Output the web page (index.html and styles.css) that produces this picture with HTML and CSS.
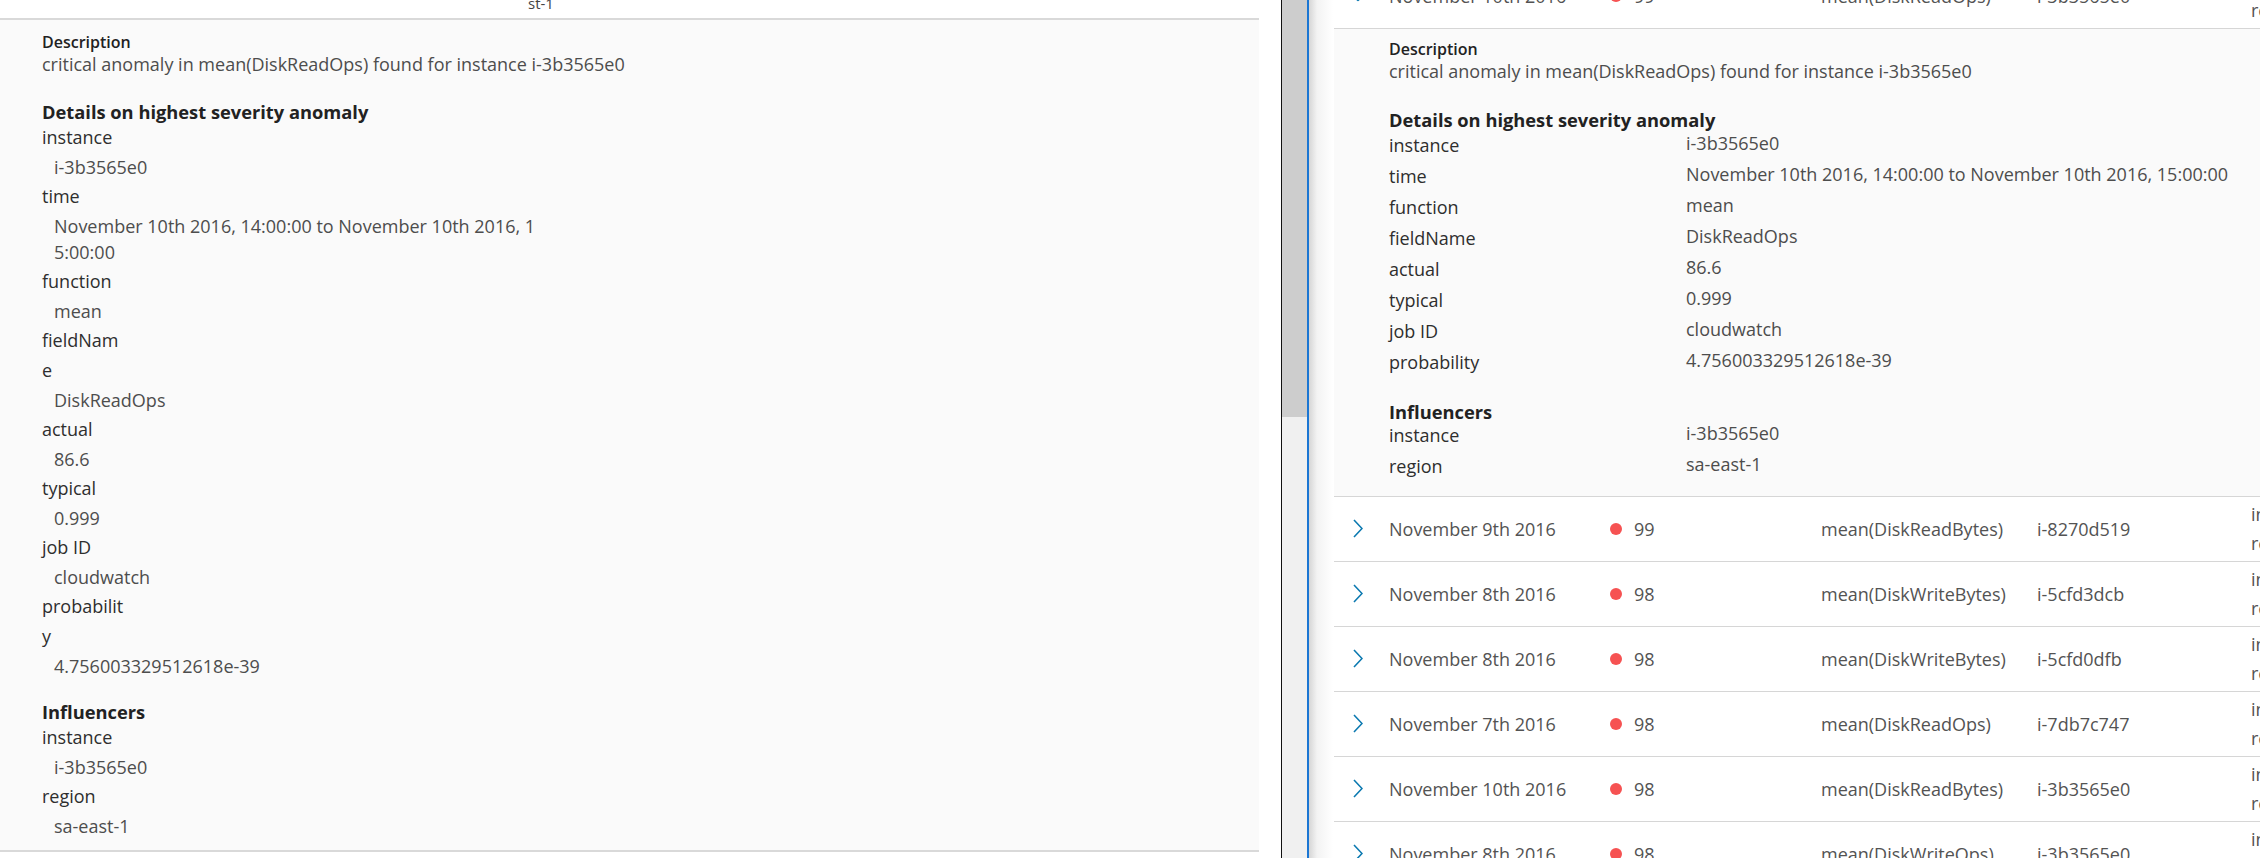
FILE: index.html
```html
<!DOCTYPE html>
<html lang="en">
<head>
<meta charset="utf-8">
<title>Anomalies</title>
<link rel="stylesheet" href="styles.css">
</head>
<body>
<div class="app">
  <section class="left">
    <div class="left-top"><span class="cut">st-1</span></div>
    <div class="left-details">
      <div class="desc-title">Description</div>
      <div class="desc-text">critical anomaly in mean(DiskReadOps) found for instance i-3b3565e0</div>
      <h3 class="sec-title">Details on highest severity anomaly</h3>
      <dl class="stack">
        <dt>instance</dt><dd>i-3b3565e0</dd>
        <dt>time</dt><dd>November 10th 2016, 14:00:00 to November 10th 2016, 15:00:00</dd>
        <dt>function</dt><dd>mean</dd>
        <dt>fieldName</dt><dd>DiskReadOps</dd>
        <dt>actual</dt><dd>86.6</dd>
        <dt>typical</dt><dd>0.999</dd>
        <dt>job ID</dt><dd>cloudwatch</dd>
        <dt>probability</dt><dd>4.756003329512618e-39</dd>
      </dl>
      <h3 class="sec-title sec-gap">Influencers</h3>
      <dl class="stack">
        <dt>instance</dt><dd>i-3b3565e0</dd>
        <dt>region</dt><dd>sa-east-1</dd>
      </dl>
    </div>
  </section>
  <div class="gutter"></div>
  <div class="scrollbar"><div class="thumb"></div></div>
  <section class="right">
    <div class="list">
      <div class="row">
        <span class="cell chev-cell"><svg class="chev open" viewBox="0 0 10 19" width="10" height="19"><polyline points="1,1 9,9.5 1,18"/></svg></span>
        <span class="cell date">November 10th 2016</span>
        <span class="cell score"><i class="dot"></i>99</span>
        <span class="cell fn">mean(DiskReadOps)</span>
        <span class="cell entity">i-3b3565e0</span>
        <span class="cell infl"><span>instance: i-3b3565e0</span><span>region: sa-east-1</span></span>
      </div>
      <div class="details">
        <div class="desc-title">Description</div>
        <div class="desc-text">critical anomaly in mean(DiskReadOps) found for instance i-3b3565e0</div>
        <h3 class="sec-title">Details on highest severity anomaly</h3>
        <dl class="pairs">
          <div class="pair"><dt>instance</dt><dd>i-3b3565e0</dd></div>
          <div class="pair"><dt>time</dt><dd>November 10th 2016, 14:00:00 to November 10th 2016, 15:00:00</dd></div>
          <div class="pair"><dt>function</dt><dd>mean</dd></div>
          <div class="pair"><dt>fieldName</dt><dd>DiskReadOps</dd></div>
          <div class="pair"><dt>actual</dt><dd>86.6</dd></div>
          <div class="pair"><dt>typical</dt><dd>0.999</dd></div>
          <div class="pair"><dt>job ID</dt><dd>cloudwatch</dd></div>
          <div class="pair"><dt>probability</dt><dd>4.756003329512618e-39</dd></div>
        </dl>
        <h3 class="sec-title sec-gap-r">Influencers</h3>
        <dl class="pairs">
          <div class="pair"><dt>instance</dt><dd>i-3b3565e0</dd></div>
          <div class="pair"><dt>region</dt><dd>sa-east-1</dd></div>
        </dl>
      </div>
      <div class="row">
        <span class="cell chev-cell"><svg class="chev" viewBox="0 0 10 19" width="10" height="19"><polyline points="1,1 9,9.5 1,18"/></svg></span>
        <span class="cell date">November 9th 2016</span>
        <span class="cell score"><i class="dot"></i>99</span>
        <span class="cell fn">mean(DiskReadBytes)</span>
        <span class="cell entity">i-8270d519</span>
        <span class="cell infl"><span>instance: i-8270d519</span><span>region: sa-east-1</span></span>
      </div>
      <div class="row">
        <span class="cell chev-cell"><svg class="chev" viewBox="0 0 10 19" width="10" height="19"><polyline points="1,1 9,9.5 1,18"/></svg></span>
        <span class="cell date">November 8th 2016</span>
        <span class="cell score"><i class="dot"></i>98</span>
        <span class="cell fn">mean(DiskWriteBytes)</span>
        <span class="cell entity">i-5cfd3dcb</span>
        <span class="cell infl"><span>instance: i-5cfd3dcb</span><span>region: sa-east-1</span></span>
      </div>
      <div class="row">
        <span class="cell chev-cell"><svg class="chev" viewBox="0 0 10 19" width="10" height="19"><polyline points="1,1 9,9.5 1,18"/></svg></span>
        <span class="cell date">November 8th 2016</span>
        <span class="cell score"><i class="dot"></i>98</span>
        <span class="cell fn">mean(DiskWriteBytes)</span>
        <span class="cell entity">i-5cfd0dfb</span>
        <span class="cell infl"><span>instance: i-5cfd0dfb</span><span>region: sa-east-1</span></span>
      </div>
      <div class="row">
        <span class="cell chev-cell"><svg class="chev" viewBox="0 0 10 19" width="10" height="19"><polyline points="1,1 9,9.5 1,18"/></svg></span>
        <span class="cell date">November 7th 2016</span>
        <span class="cell score"><i class="dot"></i>98</span>
        <span class="cell fn">mean(DiskReadOps)</span>
        <span class="cell entity">i-7db7c747</span>
        <span class="cell infl"><span>instance: i-7db7c747</span><span>region: sa-east-1</span></span>
      </div>
      <div class="row">
        <span class="cell chev-cell"><svg class="chev" viewBox="0 0 10 19" width="10" height="19"><polyline points="1,1 9,9.5 1,18"/></svg></span>
        <span class="cell date">November 10th 2016</span>
        <span class="cell score"><i class="dot"></i>98</span>
        <span class="cell fn">mean(DiskReadBytes)</span>
        <span class="cell entity">i-3b3565e0</span>
        <span class="cell infl"><span>instance: i-3b3565e0</span><span>region: sa-east-1</span></span>
      </div>
      <div class="row">
        <span class="cell chev-cell"><svg class="chev" viewBox="0 0 10 19" width="10" height="19"><polyline points="1,1 9,9.5 1,18"/></svg></span>
        <span class="cell date">November 8th 2016</span>
        <span class="cell score"><i class="dot"></i>98</span>
        <span class="cell fn">mean(DiskWriteOps)</span>
        <span class="cell entity">i-3b3565e0</span>
        <span class="cell infl"><span>instance: i-3b3565e0</span><span>region: sa-east-1</span></span>
      </div>
    </div>
  </section>
</div>
</body>
</html>
```
FILE: styles.css
```css
* { box-sizing: border-box; }
html, body {
  margin: 0;
  padding: 0;
  width: 2260px;
  height: 858px;
  overflow: hidden;
  background: #ffffff;
  font-family: "Open Sans", "Noto Sans", sans-serif;
  color: #333333;
}
.app {
  display: flex;
  width: 2260px;
  height: 858px;
}

/* ---------- left pane ---------- */
.left {
  width: 1259px;
  flex: none;
  display: flex;
  flex-direction: column;
}
.left-top {
  height: 18px;
  overflow: hidden;
  padding-left: 528px;
}
.cut {
  display: block;
  font-size: 15px;
  line-height: 15px;
  margin-top: -4px;
  color: #444444;
}
.left-details {
  background: #fafafa;
  border-top: 2px solid #d9d9d9;
  border-bottom: 2px solid #d9d9d9;
  padding: 12px 0 10px 42px;
}
.desc-title {
  font-size: 16px;
  font-weight: 600;
  line-height: 20px;
  color: #222222;
}
.desc-text {
  font-size: 18px;
  line-height: 24px;
  color: #4d4d4d;
}
.sec-title {
  margin: 25px 0 0;
  font-size: 18.3px;
  font-weight: 700;
  line-height: 21px;
  color: #222222;
}
.sec-gap { margin-top: 22.5px; }
.stack {
  margin: 0;
  font-size: 18px;
}
.stack dt {
  width: 84px;
  line-height: 30px;
  word-break: break-all;
  color: #2e2e2e;
}
.stack dd {
  margin: 1.5px 0 1.5px 12px;
  width: 485px;
  line-height: 26px;
  word-break: break-all;
  color: #4d4d4d;
}

/* ---------- divider + scrollbar ---------- */
.gutter {
  width: 22px;
  flex: none;
}
.scrollbar {
  width: 26px;
  flex: none;
  border-left: 1px solid #111111;
  background: #f0f0f0;
}
.thumb {
  height: 417px;
  background: #cdcdcd;
}

/* ---------- right pane ---------- */
.right {
  flex: 1;
  overflow: hidden;
  border-left: 2px solid #1b76d3;
  background: linear-gradient(to right, #d6d6d6 0, #f3f3f3 8px, #ffffff 24px);
}
.list {
  margin: -36px 0 0 25px;
  width: 1300px;
  background: #ffffff;
}
.row {
  display: grid;
  grid-template-columns: 55px 221px 211px 216px 214px 300px;
  align-items: center;
  height: 65px;
  border-bottom: 1px solid #d6d6d6;
  font-size: 18px;
  color: #535353;
  white-space: nowrap;
}
.chev-cell {
  padding-left: 19px;
  display: flex;
  align-items: center;
}
.chev {
  display: block;
  fill: none;
  stroke: #0b79b0;
  stroke-width: 1.6;
}
.chev.open { transform: rotate(90deg); }
.score {
  display: flex;
  align-items: center;
}
.dot {
  width: 12px;
  height: 12px;
  border-radius: 50%;
  background: #f65252;
  margin-right: 12px;
}
.infl {
  display: flex;
  flex-direction: column;
  line-height: 29px;
}
.details {
  background: #fafafa;
  border-bottom: 1px solid #d6d6d6;
  padding: 10px 0 13.5px 55px;
}
.pairs { margin: 0; font-size: 18px; }
.pair {
  display: flex;
  padding-bottom: 1px;
}
.pair dt {
  width: 297px;
  flex: none;
  line-height: 30px;
  color: #2e2e2e;
}
.pair dd {
  margin: 0;
  line-height: 27px;
  color: #4d4d4d;
}
.details .sec-title { margin-top: 25.5px; }
.details .sec-gap-r { margin-top: 23.5px; margin-bottom: -2px; }
```
